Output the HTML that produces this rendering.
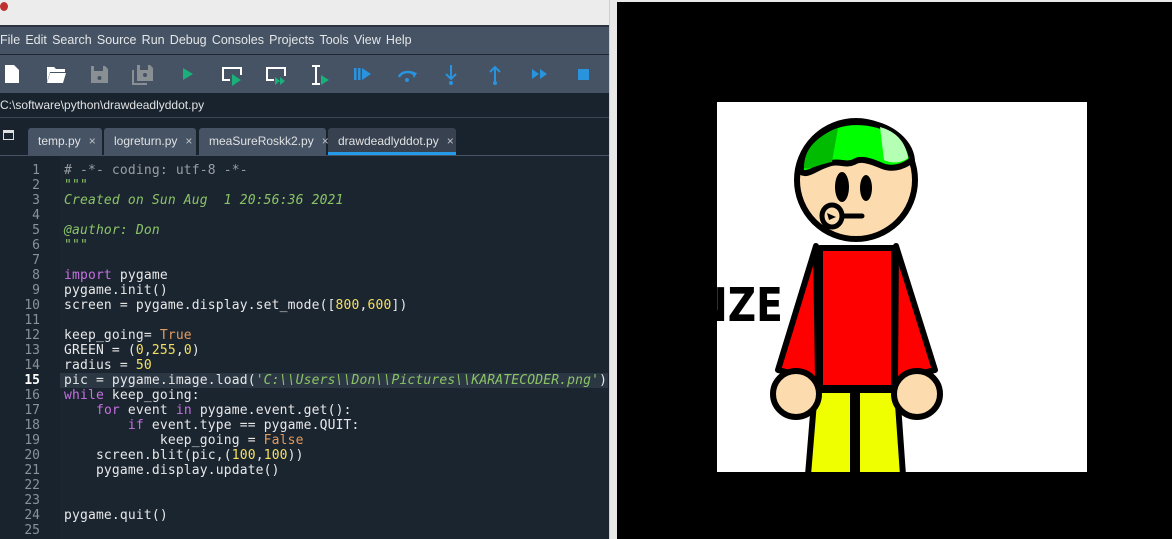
<!DOCTYPE html>
<html><head><meta charset="utf-8"><style>
*{margin:0;padding:0;box-sizing:border-box}
body{width:1172px;height:539px;overflow:hidden;background:#e8e8e8;font-family:"Liberation Sans",sans-serif;position:relative}
.abs{position:absolute}
#menu span{margin-right:5.2px}
.tab{position:absolute;top:128px;height:27px;background:#455364;color:#e0e1e3;font-size:12px;line-height:26px;padding-left:10px;border-radius:3px 3px 0 0}
.tab i{font-style:normal;color:#c0c4c8;margin-left:8px}
#code{position:absolute;left:64px;top:163px;font-family:"DejaVu Sans Mono","Liberation Mono",monospace;font-size:13px;line-height:15px;letter-spacing:0.16px;color:#e8e8e8;white-space:pre}
#ln{position:absolute;left:0;width:40px;top:163px;font-family:"DejaVu Sans Mono",monospace;font-size:13px;line-height:15px;color:#8a9199;text-align:right;white-space:pre}
.c{color:#9a9ea3}.s{color:#8bc466;font-style:italic}.k{color:#c670e0}.n{color:#f5e060}.t{color:#e49a5c}
</style></head><body>
<div class="abs" style="left:0;top:0;width:609px;height:25px;background:#ececec"></div>
<div class="abs" style="left:0;top:2px;width:8px;height:9px;background:#c03030;border-radius:50%"></div>
<div class="abs" style="left:0;top:25px;width:609px;height:2px;background:#2a3340"></div>
<div id="menu" class="abs" style="left:0;top:27px;width:609px;height:27px;background:#455364;color:#e4e6e8;font-size:12.5px;line-height:26px;white-space:nowrap"><span>File</span><span>Edit</span><span>Search</span><span>Source</span><span>Run</span><span>Debug</span><span>Consoles</span><span>Projects</span><span>Tools</span><span>View</span><span>Help</span></div>
<div class="abs" style="left:0;top:54px;width:609px;height:1px;background:#1e2731"></div>
<div class="abs" style="left:0;top:55px;width:609px;height:38px;background:#455364"></div>
<svg class="abs" style="left:0;top:55px" width="609" height="38">
<g fill="#fff"><path d="M5 10h9l5 5v13H5z"/></g>
<path d="M47 12h7l2 2h9v3H50l-3 10z" fill="#fff"/><path d="M50 18h16l-3 10H47z" fill="#fff"/>
<g fill="#8a8f94"><path d="M91 11h14l3 3v14H91z"/></g><rect x="94" y="11" width="9" height="5" fill="#455364"/><circle cx="99.5" cy="23" r="2" fill="#455364"/>
<path d="M134 15v13h13v2h-15V15z" fill="#8a8f94"/><path d="M137 10h13l3 3v13h-16z" fill="#8a8f94"/><rect x="140" y="10" width="8" height="5" fill="#455364"/><circle cx="145" cy="20" r="2" fill="#455364"/>
<path d="M183 13l10 6-10 6z" fill="#1ab07a"/>
<rect x="223" y="13" width="18" height="12" fill="none" stroke="#fff" stroke-width="2"/><rect x="230" y="20" width="12" height="12" fill="#455364"/><path d="M232 19l9 6-9 6z" fill="#1ab07a"/>
<rect x="267" y="13" width="18" height="12" fill="none" stroke="#fff" stroke-width="2"/><rect x="274" y="21" width="13" height="10" fill="#455364"/><path d="M275 22l5 4-5 4zM280 22l5 4-5 4z" fill="#1ab07a"/>
<path d="M312 11h8M316 11v18M312 29h8" stroke="#fff" stroke-width="2" fill="none"/><path d="M321 20l8 5-8 5z" fill="#1ab07a"/>
<g fill="#2a93de"><rect x="354" y="13" width="2.5" height="12"/><rect x="358" y="13" width="2.5" height="12"/><path d="M362 13l9 6-9 6z"/>
<path d="M399 22a9 7 0 0 1 16-2" stroke="#2a93de" stroke-width="2.5" fill="none"/><path d="M411 16l6 2-3 5z"/><circle cx="407" cy="25" r="2"/>
<path d="M451 10v14M446 19l5 5 5-5" stroke="#2a93de" stroke-width="2" fill="none"/><circle cx="451" cy="28" r="2"/>
<path d="M495 12v14M490 17l5-5 5 5" stroke="#2a93de" stroke-width="2" fill="none"/><circle cx="495" cy="28" r="2"/>
<path d="M532 14l7 5-7 5zM540 14l7 5-7 5z"/><rect x="578" y="14" width="11" height="11"/></g>
</svg>
<div class="abs" style="left:0;top:93px;width:609px;height:25px;background:#19232d;color:#e0e1e3;font-size:12px;line-height:24px">C:\software\python\drawdeadlyddot.py</div>
<div class="abs" style="left:0;top:117px;width:609px;height:1px;background:#3a4553"></div>
<div class="abs" style="left:0;top:118px;width:609px;height:37px;background:#19232d"></div>
<div class="abs" style="left:3px;top:130px;width:11px;height:10px;border:1.5px solid #e0e0e0;border-top-width:3px"></div>
<div class="tab" style="left:28px;width:74px">temp.py<i>×</i></div>
<div class="tab" style="left:104px;width:92px">logreturn.py<i>×</i></div>
<div class="tab" style="left:199px;width:127px">meaSureRoskk2.py<i>×</i></div>
<div class="tab" style="left:328px;width:128px;background:#37414f;border-bottom:3px solid #259ae9">drawdeadlyddot.py<i>×</i></div>
<div class="abs" style="left:0;top:155px;width:609px;height:1px;background:#455364"></div>
<div class="abs" style="left:0;top:156px;width:609px;height:383px;background:#19232d"></div>
<div class="abs" style="left:60px;top:156px;width:549px;height:383px;background:#1b2530"></div>
<div class="abs" style="left:60px;top:373px;width:548px;height:15px;background:#2c3744"></div>
<div id="ln">1
2
3
4
5
6
7
8
9
10
11
12
13
14
<b style="color:#fff">15</b>
16
17
18
19
20
21
22
23
24
25</div>
<div id="code"><span class="c"># -*- coding: utf-8 -*-</span>
<span class="s">"""</span>
<span class="s">Created on Sun Aug  1 20:56:36 2021</span>

<span class="s">@author: Don</span>
<span class="s">"""</span>

<span class="k">import</span> pygame
pygame.init()
screen = pygame.display.set_mode([<span class="n">800</span>,<span class="n">600</span>])

keep_going= <span class="t">True</span>
GREEN = (<span class="n">0</span>,<span class="n">255</span>,<span class="n">0</span>)
radius = <span class="n">50</span>
pic = pygame.image.load(<span class="s">'C:\\Users\\Don\\Pictures\\KARATECODER.png'</span>)
<span class="k">while</span> keep_going:
    <span class="k">for</span> event <span class="k">in</span> pygame.event.get():
        <span class="k">if</span> event.type == pygame.QUIT:
            keep_going = <span class="t">False</span>
    screen.blit(pic,(<span class="n">100</span>,<span class="n">100</span>))
    pygame.display.update()


pygame.quit()
</div>
<div class="abs" style="left:609px;top:0;width:1px;height:539px;background:#cfcfcf"></div>
<div class="abs" style="left:617px;top:2px;width:555px;height:537px;background:#000"></div>
<div class="abs" style="left:717px;top:102px;width:370px;height:370px;background:#fff;overflow:hidden">
<div class="abs" style="left:-22px;top:176px;font:900 46px 'DejaVu Sans',sans-serif;color:#000;transform:scaleX(0.85);transform-origin:left">NZE</div>
<svg class="abs" style="left:0;top:0" width="370" height="370" viewBox="717 102 370 370">
<g stroke="#000" stroke-width="6" stroke-linejoin="round">
<path d="M816 246L778 370L818 380z" fill="#f00"/><path d="M896 246L935 370L895 380z" fill="#f00"/>
<path d="M815 390L808 475H853V390zM857 390V475H903L897 390z" fill="#f0ff00"/>
<rect x="820" y="248" width="74" height="140" fill="#f00"/>
<circle cx="796" cy="394" r="23" fill="#fcdbae"/><circle cx="917" cy="394" r="23" fill="#fcdbae"/>
<circle cx="856" cy="180" r="59" fill="#fcdbae"/>
<path d="M801 172C800 150 820 123 856 122C888 122 910 140 912 160C902 168 890 170 880 165C868 160 860 158 854 162C846 166 838 160 828 164C815 168 808 176 801 172z" fill="#0f0"/>
</g>
<path d="M804 168C804 150 815 137 838 128L832 162C820 164 810 170 804 168z" fill="#0b0"/>
<path d="M880 127C898 132 906 144 908 158C900 164 890 163 884 160z" fill="#b4ffb4"/>
<ellipse cx="842" cy="187" rx="7" ry="15" fill="#000"/><ellipse cx="866" cy="188" rx="6" ry="13" fill="#000"/>
<path d="M842 216h20" stroke="#000" stroke-width="5" stroke-linecap="round"/>
<ellipse cx="832" cy="216" rx="10" ry="11" fill="none" stroke="#000" stroke-width="5"/><path d="M827 213l9 4-7 3z" fill="#000"/>
</svg></div>
</body></html>
